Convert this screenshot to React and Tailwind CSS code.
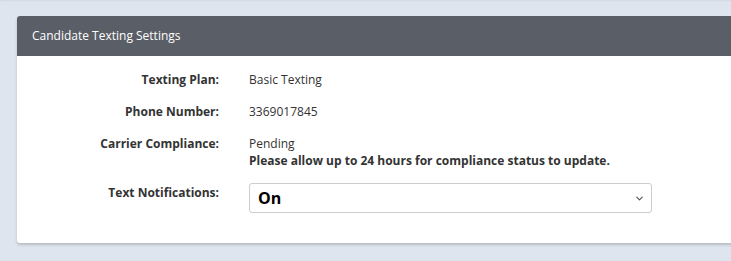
import { ChevronDown } from 'lucide-react'

const rows = [
  { label: 'Texting Plan:', value: 'Basic Texting' },
  { label: 'Phone Number:', value: '3369017845' },
]

export default function App() {
  return (
    <div className="w-[731px] h-[261px] overflow-hidden bg-[#dfe5ee] pt-4 pl-[17px] font-['Open_Sans',sans-serif] text-[12px] text-[#333] shadow-[inset_0_2px_2px_-1px_rgba(0,0,0,0.06)]">
      <div className="w-[740px] bg-white rounded-[3px] shadow-[0_2px_3px_rgba(0,0,0,0.18)]">
        {/* header */}
        <div className="h-10 bg-[#5a5e66] rounded-t-[3px] px-[15px] flex items-center text-[12px] text-white">
          Candidate Texting Settings
        </div>

        {/* body */}
        <div className="pt-[13px] pb-[30px]">
          {rows.map(r => (
            <div key={r.label} className="flex h-8 items-start pt-[2px]">
              <div className="w-[202px] text-right font-bold">{r.label}</div>
              <div className="ml-[30px]">{r.value}</div>
            </div>
          ))}
          <div className="flex items-start pt-[2px] h-[50px]">
            <div className="w-[202px] text-right font-bold">Carrier Compliance:</div>
            <div className="ml-[30px] leading-[17px]">
              <div>Pending</div>
              <div className="font-bold">Please allow up to 24 hours for compliance status to update.</div>
            </div>
          </div>
          <div className="flex items-start">
            <div className="w-[202px] text-right font-bold pt-[1px]">Text Notifications:</div>
            <div className="ml-[30px] w-[403px] h-[30px] border border-[#ccc] rounded-[3px] flex items-center justify-between pl-2 pr-[6px]">
              <span className="text-[16px] font-bold text-black">On</span>
              <ChevronDown size={11} strokeWidth={2.5} className="text-[#555]" />
            </div>
          </div>
        </div>
      </div>
    </div>
  )
}
